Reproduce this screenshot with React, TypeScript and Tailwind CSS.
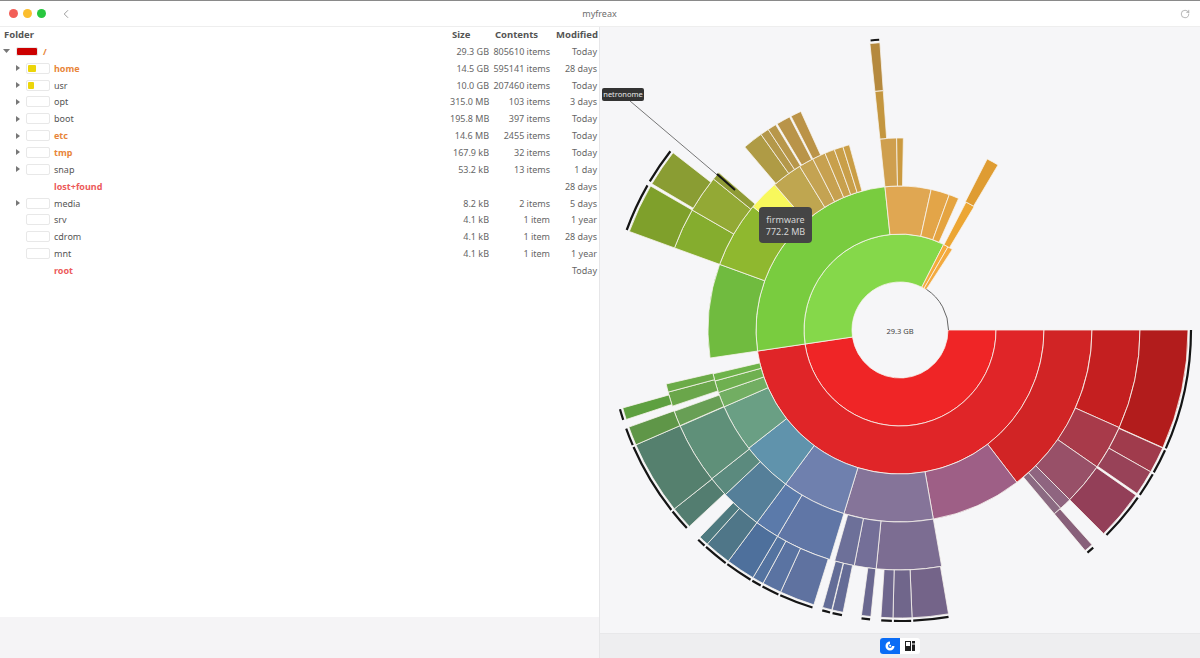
import { ChevronLeft, RotateCw } from "lucide-react";

const CX = 900;
const CY = 330;
const R = [48, 96, 144, 192, 240, 288];

function pt(r: number, a: number): string {
  const t = (a * Math.PI) / 180;
  return `${(CX + r * Math.cos(t)).toFixed(2)} ${(CY + r * Math.sin(t)).toFixed(2)}`;
}

function wedge(ring: number, a0: number, a1: number): string {
  const r0 = R[ring];
  const r1 = R[ring + 1];
  const large = a1 - a0 > 180 ? 1 : 0;
  return `M${pt(r0, a0)}L${pt(r1, a0)}A${r1} ${r1} 0 ${large} 1 ${pt(r1, a1)}L${pt(r0, a1)}A${r0} ${r0} 0 ${large} 0 ${pt(r0, a0)}Z`;
}

function arc(r: number, a0: number, a1: number): string {
  const large = a1 - a0 > 180 ? 1 : 0;
  return `M${pt(r, a0)}A${r} ${r} 0 ${large} 1 ${pt(r, a1)}`;
}

const wedges: [number, number, number, string][] = [
  // ring 0
  [0, 0, 171.6, "#ef2526"],
  [0, 171.6, 297, "#85d84a"],
  [0, 297, 300, "#f5ab3a"],
  [0, 300, 303, "#f3aa40"],
  // ring 1
  [1, 0, 171.6, "#e02528"],
  [1, 171.6, 264, "#79cc3f"],
  [1, 264, 282.5, "#e0a752"],
  [1, 282.5, 290, "#e3a548"],
  [1, 290, 294, "#e5a440"],
  [1, 297.3, 301, "#eca634"],
  // ring 2
  [2, 0, 52.5, "#d12425"],
  [2, 52.5, 80, "#9e5f86"],
  [2, 80, 107, "#857499"],
  [2, 107, 126.6, "#6f80ae"],
  [2, 126.6, 142, "#6093ac"],
  [2, 142, 156.4, "#6a9f84"],
  [2, 156.4, 161, "#72ae62"],
  [2, 161, 164.6, "#6fb050"],
  [2, 164.6, 166.8, "#6eb34a"],
  [2, 171.6, 200, "#70bb3f"],
  [2, 200, 220, "#8fb82f"],
  [2, 220, 229.2, "#f8f85c"],
  [2, 229.2, 238.5, "#bfa650"],
  [2, 238.5, 243, "#c4a352"],
  [2, 243, 247, "#c7a150"],
  [2, 247, 250, "#c8a04c"],
  [2, 250, 252.7, "#c99f49"],
  [2, 252.7, 254.7, "#ca9e46"],
  [2, 264, 269, "#cf9f4e"],
  [2, 269, 271, "#cb9a40"],
  [2, 297, 300.7, "#df9c32"],
  // ring 3
  [3, 0, 24, "#c41f20"],
  [3, 24, 34.8, "#a83a4a"],
  [3, 34.8, 45, "#985068"],
  [3, 45, 48, "#8f6580"],
  [3, 48, 50, "#8b6a82"],
  [3, 80, 95.7, "#7c6d92"],
  [3, 95.7, 101, "#746f98"],
  [3, 101, 105.8, "#6d7099"],
  [3, 107, 120.7, "#6076a6"],
  [3, 120.7, 126.6, "#5b7aaa"],
  [3, 126.6, 136.7, "#557f99"],
  [3, 136.7, 141.7, "#5b8a7e"],
  [3, 141.7, 156.4, "#5f9079"],
  [3, 156.5, 160.2, "#689f55"],
  [3, 161.5, 165, "#6aa64a"],
  [3, 165, 167, "#6bab48"],
  [3, 200, 210, "#85ad2e"],
  [3, 210, 219, "#93a935"],
  [3, 219, 221, "#8f9b35"],
  [3, 229.7, 234.6, "#af9b45"],
  [3, 234.6, 236.7, "#b4984a"],
  [3, 236.7, 238.8, "#b8974a"],
  [3, 239.2, 242.6, "#b99449"],
  [3, 243, 245.6, "#bb9347"],
  [3, 264, 266, "#c4963f"],
  // ring 4
  [4, 0, 24.1, "#b21c1c"],
  [4, 24.2, 29.5, "#a03b4c"],
  [4, 29.5, 34.6, "#984258"],
  [4, 35, 45, "#933f58"],
  [4, 48.2, 50, "#88607a"],
  [4, 80.3, 87.6, "#746489"],
  [4, 87.6, 91.4, "#70668b"],
  [4, 91.4, 93.8, "#6e668d"],
  [4, 95.8, 97.7, "#6a6890"],
  [4, 101.4, 103.6, "#656c96"],
  [4, 103.7, 105.6, "#636d97"],
  [4, 107.4, 114.5, "#5f72a0"],
  [4, 114.5, 118.4, "#5a73a2"],
  [4, 118.4, 120.7, "#5473a0"],
  [4, 120.7, 126.6, "#4e709c"],
  [4, 126.6, 132, "#4f7688"],
  [4, 132, 134, "#4e7a80"],
  [4, 137, 141.6, "#537d70"],
  [4, 141.6, 156.5, "#55806e"],
  [4, 156.5, 160.3, "#5f9648"],
  [4, 161.9, 164.3, "#5ea040"],
  [4, 200, 210, "#7fa02b"],
  [4, 210.5, 218, "#8a9d33"],
  [4, 264, 266, "#b5893e"],
];

const marks: [number, number][] = [
  [0, 24], [24.4, 29.3], [29.7, 34.5], [35.2, 44.8], [48.4, 49.9],
  [80.4, 87.4], [87.8, 91.2], [91.6, 93.7], [95.9, 97.6], [101.5, 103.4], [103.9, 105.5],
  [107.5, 114.3], [114.7, 118.2], [118.6, 120.5], [120.9, 126.4], [126.8, 131.8], [132.2, 133.9],
  [137.1, 141.4], [141.8, 156.3], [156.7, 160.2], [162, 164.2],
  [200.1, 209.8], [210.7, 217.9], [264.2, 265.9],
];

type Row = {
  name: string;
  size?: string;
  items?: string;
  mod: string;
  arrow?: boolean;
  fill?: number;
  box?: boolean;
  tone?: "orange" | "red";
};

const rows: Row[] = [
  { name: "home", size: "14.5 GB", items: "595141 items", mod: "28 days", arrow: true, fill: 8, box: true, tone: "orange" },
  { name: "usr", size: "10.0 GB", items: "207460 items", mod: "Today", arrow: true, fill: 6, box: true },
  { name: "opt", size: "315.0 MB", items: "103 items", mod: "3 days", arrow: true, box: true },
  { name: "boot", size: "195.8 MB", items: "397 items", mod: "Today", arrow: true, box: true },
  { name: "etc", size: "14.6 MB", items: "2455 items", mod: "Today", arrow: true, box: true, tone: "orange" },
  { name: "tmp", size: "167.9 kB", items: "32 items", mod: "Today", arrow: true, box: true, tone: "orange" },
  { name: "snap", size: "53.2 kB", items: "13 items", mod: "1 day", arrow: true, box: true },
  { name: "lost+found", mod: "28 days", tone: "red" },
  { name: "media", size: "8.2 kB", items: "2 items", mod: "5 days", arrow: true, box: true },
  { name: "srv", size: "4.1 kB", items: "1 item", mod: "1 year", box: true },
  { name: "cdrom", size: "4.1 kB", items: "1 item", mod: "28 days", box: true },
  { name: "mnt", size: "4.1 kB", items: "1 item", mod: "1 year", box: true },
  { name: "root", mod: "Today", tone: "red" },
];

function RowView({ r }: { r: Row }) {
  const tone =
    r.tone === "orange"
      ? "font-bold text-[#e8853a]"
      : r.tone === "red"
        ? "font-bold text-[#ec5a5a]"
        : "text-[#555555]";
  return (
    <div className="grid h-[16.85px] grid-cols-[450px_39px_61px_47px] items-center whitespace-nowrap text-[#666666]">
      <div className="flex items-center pl-[16px]">
        <div className="flex w-[10px] items-center">
          {r.arrow && (
            <svg width="4" height="6" viewBox="0 0 4 6">
              <path d="M0 0L4 3L0 6Z" fill="#777777" />
            </svg>
          )}
        </div>
        <div className="h-[11px] w-[24px] rounded-[2px]">
          {r.box && (
            <div className="h-[11px] w-[24px] rounded-[2px] border border-[#e8e8e8] bg-white p-[1px]">
              {r.fill ? <div className="h-full rounded-[1px] bg-[#ecd50a]" style={{ width: r.fill }} /> : null}
            </div>
          )}
        </div>
        <span className={`ml-[4px] ${tone}`}>{r.name}</span>
      </div>
      <div className="text-right">{r.size}</div>
      <div className="text-right">{r.items}</div>
      <div className="text-right">{r.mod}</div>
    </div>
  );
}

export default function App() {
  return (
    <div className="flex h-[658px] w-[1200px] flex-col overflow-hidden bg-white font-['Noto_Sans','Open_Sans',sans-serif] text-[9px] leading-none">
      <div className="h-px bg-[#8a8a8a]" />
      <header className="grid h-[26px] grid-cols-[1fr_auto_1fr] items-center border-b border-[#eeeeee] bg-white pl-[9px] pr-[10px]">
        <div className="flex items-center">
          <span className="h-[9px] w-[9px] rounded-full bg-[#f25f58]" />
          <span className="ml-[5px] h-[9px] w-[9px] rounded-full bg-[#fbbe2e]" />
          <span className="ml-[5px] h-[9px] w-[9px] rounded-full bg-[#28c73f]" />
          <ChevronLeft className="ml-[13px] h-[14px] w-[14px] text-[#666666]" strokeWidth={1.1} />
        </div>
        <div className="text-[9px] text-[#6e6e6e]">myfreax</div>
        <div className="flex justify-end">
          <RotateCw className="h-[10px] w-[10px] text-[#777777]" strokeWidth={1.25} />
        </div>
      </header>
      <div className="flex min-h-0 flex-1">
        <div className="flex w-[599px] flex-col">
          <div className="flex-1 bg-white">
            <div className="grid h-[16px] grid-cols-[449px_42px_62px_44px] items-center whitespace-nowrap text-[9.5px] font-bold text-[#555555]">
              <div className="pl-[4px]">Folder</div>
              <div className="pl-[3px]">Size</div>
              <div className="pl-[4px]">Contents</div>
              <div className="pl-[3px]">Modified</div>
            </div>
            <div className="grid h-[16.85px] grid-cols-[450px_39px_61px_47px] items-center whitespace-nowrap text-[#666666]">
              <div className="flex items-center pl-[3px]">
                <svg width="7" height="4" viewBox="0 0 7 4">
                  <path d="M0 0H7L3.5 4Z" fill="#777777" />
                </svg>
                <div className="ml-[6px] h-[9px] w-[22px] rounded-[2px] border border-[#e8e8e8] bg-[#cc0000]" />
                <span className="ml-[5px] font-bold text-[#e8853a]">/</span>
              </div>
              <div className="text-right">29.3 GB</div>
              <div className="text-right">805610 items</div>
              <div className="text-right">Today</div>
            </div>
            {rows.map((r) => (
              <RowView key={r.name} r={r} />
            ))}
          </div>
          <div className="h-[41px] bg-[#f5f4f6]" />
        </div>
        <div className="w-px bg-[#e6e6e8]" />
        <div className="flex w-[600px] flex-col">
          <div className="relative flex-1 bg-[#f6f6f8]">
            <svg className="block h-[606px] w-[600px]" viewBox="600 27 600 606">
              {wedges.map(([ring, a0, a1, c], i) => (
                <path key={i} d={wedge(ring, a0, a1)} fill={c} stroke="#f7f4ee" strokeWidth="0.8" strokeLinejoin="round" />
              ))}
              {marks.map(([a0, a1], i) => (
                <path key={i} d={arc(291, a0, a1)} fill="none" stroke="#151515" strokeWidth="2.2" />
              ))}
              <path d={arc(48.5, 303, 360)} fill="none" stroke="#666666" strokeWidth="1" />
              <path d="M630 101L735 190" fill="none" stroke="#555555" strokeWidth="0.8" />
              <path d="M717 174L735 190" fill="none" stroke="#151515" strokeWidth="2" />
              <text x="900" y="333.5" textAnchor="middle" fontSize="7.5" fill="#444444">
                29.3 GB
              </text>
            </svg>
            <div className="absolute left-[2px] top-[61px] flex h-[13px] w-[42px] items-center justify-center rounded-[2px] bg-[#333333] text-[7.5px] text-[#e8e8e8]">
              netronome
            </div>
            <div className="absolute left-[159px] top-[180px] flex h-[36px] w-[53px] flex-col items-center justify-center gap-[3px] rounded-[4px] bg-[#454545] text-[9px] leading-[9px] text-[#d5d5d5]">
              <span>firmware</span>
              <span>772.2 MB</span>
            </div>
          </div>
          <div className="flex h-[25px] items-center justify-center border-t border-[#e8e8ea] bg-[#eeeef0]">
            <div className="flex h-[16px] w-[40px] overflow-hidden rounded-[3px] bg-white">
              <div className="flex w-[20px] items-center justify-center bg-[#0a6cf5]">
                <svg width="10" height="10" viewBox="0 0 10 10">
                  <path d="M5 0.5A4.5 4.5 0 1 0 9.5 5H7A2 2 0 1 1 5 3Z" fill="#ffffff" />
                  <circle cx="5.2" cy="4.8" r="1" fill="#ffffff" />
                </svg>
              </div>
              <div className="flex w-[20px] items-center justify-center">
                <svg width="10" height="10" viewBox="0 0 10 10">
                  <rect x="0.5" y="0.5" width="5" height="9" fill="none" stroke="#222222" strokeWidth="1" />
                  <rect x="1" y="5" width="4" height="4" fill="#222222" />
                  <rect x="7" y="0" width="3" height="2.5" fill="#222222" />
                  <rect x="7" y="3.5" width="3" height="6.5" fill="#222222" />
                </svg>
              </div>
            </div>
          </div>
        </div>
      </div>
    </div>
  );
}
